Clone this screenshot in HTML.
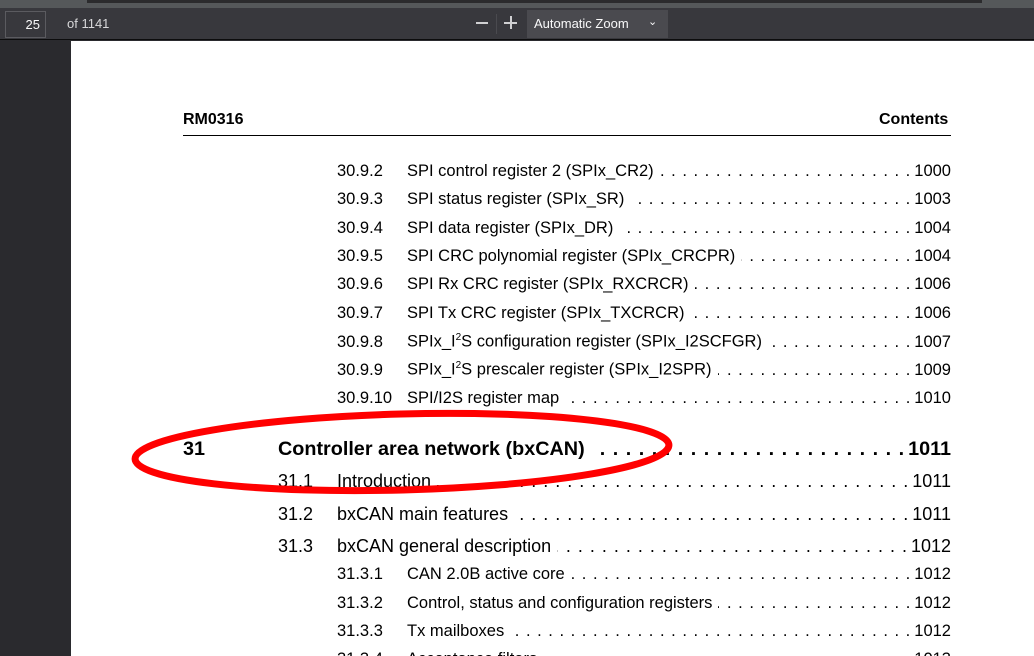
<!DOCTYPE html>
<html><head><style>
*{margin:0;padding:0;box-sizing:border-box}
html,body{width:1034px;height:656px;overflow:hidden}
body{background:#2a2a2e;font-family:"Liberation Sans",Arial,sans-serif;position:relative}
.top{position:absolute;left:0;top:0;width:1034px;height:8px;background:#55585a}
.topd{position:absolute;left:87px;top:0;width:895px;height:3px;background:#2b2b2d}
.tb{position:absolute;left:0;top:8px;width:1034px;height:32px;background:#38383d;border-bottom:1px solid #0c0c0d;color:#f9f9fa;font-size:13px}
.inp{position:absolute;left:5px;top:3px;width:41px;height:27px;border:1px solid #5b5b60;background:#38383d;text-align:right;padding:5px 5px 0 0}
.page{position:absolute;left:71px;top:41px;width:963px;height:615px;background:#fff;overflow:hidden}
.r{position:absolute;display:flex;align-items:baseline;color:#000;white-space:nowrap}
.d{flex:1;overflow:hidden;white-space:nowrap;margin:0 3px 0 6px;letter-spacing:1px;direction:rtl;text-align:left}
.s{font-size:16.5px;left:266px;width:614px}
.s .n{width:70px}
.m{font-size:18px;left:207px;width:673px}
.m .n{width:59px}
</style></head><body>
<div class="top"><div class="topd"></div></div>
<div class="tb">
<div class="inp">25</div>
<div style="position:absolute;left:67px;top:8px;color:#d8d8da">of 1141</div>
<div style="position:absolute;left:476px;top:14px;width:12px;height:1.5px;background:#d0d0d2"></div>
<div style="position:absolute;left:496px;top:6px;width:1px;height:20px;background:#4a4a4f"></div>
<div style="position:absolute;left:504px;top:14px;width:13px;height:1.5px;background:#d0d0d2"></div>
<div style="position:absolute;left:510px;top:8px;width:1.5px;height:13px;background:#d0d0d2"></div>
<div style="position:absolute;left:527px;top:2px;width:141px;height:28px;background:#4a4a4f;padding:6px 0 0 7px">Automatic Zoom<span style="position:absolute;left:121px;top:5px;font-size:11px">&#8964;</span></div>
</div>
<div class="page">
<div style="position:absolute;left:112px;top:70px;font-weight:bold;font-size:16px">RM0316</div>
<div style="position:absolute;left:808px;top:70px;font-weight:bold;font-size:16px">Contents</div>
<div style="position:absolute;left:112px;top:94px;width:768px;height:1px;background:#000"></div>

<div class="r s" style="top:121px"><span class="n">30.9.2</span><span>SPI control register 2 (SPIx_CR2)</span><span class="d">. . . . . . . . . . . . . . . . . . . . . . . . . . . . . . . . . . . . . . . . . . . . . . . . . . . . . . . . .</span><span>1000</span></div>
<div class="r s" style="top:149px"><span class="n">30.9.3</span><span>SPI status register (SPIx_SR)</span><span class="d">. . . . . . . . . . . . . . . . . . . . . . . . . . . . . . . . . . . . . . . . . . . . . . . . . . . . . . . . .</span><span>1003</span></div>
<div class="r s" style="top:178px"><span class="n">30.9.4</span><span>SPI data register (SPIx_DR)</span><span class="d">. . . . . . . . . . . . . . . . . . . . . . . . . . . . . . . . . . . . . . . . . . . . . . . . . . . . . . . . .</span><span>1004</span></div>
<div class="r s" style="top:206px"><span class="n">30.9.5</span><span>SPI CRC polynomial register (SPIx_CRCPR)</span><span class="d">. . . . . . . . . . . . . . . . . . . . . . . . . . . . . . . . . . . . . . . . . . . . . . . . .</span><span>1004</span></div>
<div class="r s" style="top:234px"><span class="n">30.9.6</span><span>SPI Rx CRC register (SPIx_RXCRCR)</span><span class="d">. . . . . . . . . . . . . . . . . . . . . . . . . . . . . . . . . . . . . . . . . . . . . . . . .</span><span>1006</span></div>
<div class="r s" style="top:263px"><span class="n">30.9.7</span><span>SPI Tx CRC register (SPIx_TXCRCR)</span><span class="d">. . . . . . . . . . . . . . . . . . . . . . . . . . . . . . . . . . . . . . . . . . . . . . . . .</span><span>1006</span></div>
<div class="r s" style="top:291px"><span class="n">30.9.8</span><span>SPIx_I<sup style="font-size:10px">2</sup>S configuration register (SPIx_I2SCFGR)</span><span class="d">. . . . . . . . . . . . . . . . . . . . . . . . . . . .</span><span>1007</span></div>
<div class="r s" style="top:319px"><span class="n">30.9.9</span><span>SPIx_I<sup style="font-size:10px">2</sup>S prescaler register (SPIx_I2SPR)</span><span class="d">. . . . . . . . . . . . . . . . . . . . . . . . . . . . . . . . . . . .</span><span>1009</span></div>
<div class="r s" style="top:348px"><span class="n">30.9.10</span><span>SPI/I2S register map</span><span class="d">. . . . . . . . . . . . . . . . . . . . . . . . . . . . . . . . . . . . . . . . . . . . . . . . . . . . . . . . . .</span><span>1010</span></div>

<div class="r" style="top:397px;left:112px;width:768px;font-size:19.8px;font-weight:bold"><span style="width:95px">31</span><span>Controller area network (bxCAN)</span><span class="d">. . . . . . . . . . . . . . . . . . . . . . . . . . . . . . . . . . . . .</span><span>1011</span></div>
<div class="r m" style="top:430px"><span class="n">31.1</span><span>Introduction</span><span class="d">. . . . . . . . . . . . . . . . . . . . . . . . . . . . . . . . . . . . . . . . . . . . . . . . . . . . . . . . . . .</span><span>1011</span></div>
<div class="r m" style="top:463px"><span class="n">31.2</span><span>bxCAN main features</span><span class="d">. . . . . . . . . . . . . . . . . . . . . . . . . . . . . . . . . . . . . . . . . . . . . . . . . . . . . . .</span><span>1011</span></div>
<div class="r m" style="top:495px"><span class="n">31.3</span><span>bxCAN general description</span><span class="d">. . . . . . . . . . . . . . . . . . . . . . . . . . . . . . . . . . . . . . . . . . . . . . . . . . . . . . .</span><span>1012</span></div>
<div class="r s" style="top:524px"><span class="n">31.3.1</span><span>CAN 2.0B active core</span><span class="d">. . . . . . . . . . . . . . . . . . . . . . . . . . . . . . . . . . . . . . . . . . . . . . . . . . . . . . . .</span><span>1012</span></div>
<div class="r s" style="top:553px"><span class="n">31.3.2</span><span>Control, status and configuration registers</span><span class="d">. . . . . . . . . . . . . . . . . . . . . . . . . . . . . . . . . . . . . . . .</span><span>1012</span></div>
<div class="r s" style="top:581px"><span class="n">31.3.3</span><span>Tx mailboxes</span><span class="d">. . . . . . . . . . . . . . . . . . . . . . . . . . . . . . . . . . . . . . . . . . . . . . . . . . . . . . . . .</span><span>1012</span></div>
<div class="r s" style="top:609px"><span class="n">31.3.4</span><span>Acceptance filters</span><span class="d">. . . . . . . . . . . . . . . . . . . . . . . . . . . . . . . . . . . . . . . . . . . . . . . . . . . . . . . .</span><span>1013</span></div>
</div>
<svg style="position:absolute;left:0;top:0" width="1034" height="656"><ellipse cx="402" cy="452" rx="267" ry="38" fill="none" stroke="#f00" stroke-width="7" transform="rotate(-1.5 402 452)"/></svg>
</body></html>
